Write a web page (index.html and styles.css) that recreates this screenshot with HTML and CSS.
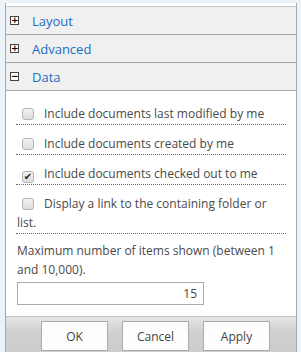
FILE: index.html
```html
<!DOCTYPE html>
<html lang="en">
<head>
    <meta charset="UTF-8">
    <title>Query Options</title>
    <link rel="stylesheet" href="styles.css">
</head>
<body>

    <div class="panel">
        <div class="section-head first">
            <span class="toggle">+</span>
            <span class="title">Layout</span>
        </div>
        <div class="section-head">
            <span class="toggle">+</span>
            <span class="title">Advanced</span>
        </div>
        <div class="section-head">
            <span class="toggle minus">&minus;</span>
            <span class="title">Data</span>
        </div>

        <div class="section-body">
            <div class="row">
                <span class="check"></span>Include documents last modified by me
            </div>
            <div class="row">
                <span class="check"></span>Include documents created by me
            </div>
            <div class="row">
                <span class="check checked">&#10004;</span>Include documents checked out to me
            </div>
            <div class="row">
                <span class="check"></span>Display a link to the containing folder or list.
            </div>
            <div class="field">
                <label for="max-items">Maximum number of items shown (between 1 and 10,000).</label>
                <input type="text" id="max-items" value="15">
            </div>
        </div>

        <!-- Dialog buttons -->
        <div class="footer">
            <button>OK</button>
            <button>Cancel</button>
            <button>Apply</button>
        </div>
    </div>

</body>
</html>
```

FILE: styles.css
```css
body {
    margin: 0;
    background: #edf2f9;
    font-family: 'Open Sans', sans-serif;
    font-size: 12px;
    color: #4a4a4a;
}

.panel {
    width: 290px;
    margin: 3px 0 0 5px;
    padding-top: 3px;
    background: white;
    border-left: 1px solid #a8a8a8;
    border-right: 1px solid #a8a8a8;
}

.section-head {
    display: flex;
    align-items: center;
    height: 27px;
    background: #f0f0f0;
    border-bottom: 1px solid #a6a6a6;
}

.section-head.first {
    border-top: 1px solid #c8c8c8;
}

.toggle {
    width: 7px;
    height: 7px;
    margin-left: 4px;
    border: 1px solid #444444;
    background: white;
    color: #000000;
    font-family: 'DejaVu Sans', sans-serif;
    font-size: 9px;
    font-weight: bold;
    line-height: 7px;
    text-align: center;
}

.title {
    margin-left: 13px;
    color: #1a6ec0;
    font-size: 13px;
}

.section-body {
    padding: 4px 10px 11px 10px;
}

.row {
    padding: 9px 1px 1px 1px;
    line-height: 19px;
    border-bottom: 1px dotted #4a66b8;
}

.check {
    display: inline-block;
    box-sizing: border-box;
    width: 12px;
    height: 12px;
    margin: 0 10px 0 5px;
    vertical-align: -2px;
    border: 1px solid #b4b4b4;
    border-radius: 3px;
    background: linear-gradient(to bottom, #f2f2f2, #dddddd);
    color: #222222;
    font-family: 'DejaVu Sans', sans-serif;
    font-size: 10px;
    line-height: 10px;
    text-align: center;
}

.field {
    padding: 7px 1px 0 1px;
    line-height: 19px;
}

.field input {
    display: block;
    box-sizing: border-box;
    width: 187px;
    height: 23px;
    margin-top: 3px;
    padding: 0 6px;
    border: 1px solid #ababab;
    font-family: 'Open Sans', sans-serif;
    font-size: 12px;
    color: #444444;
    text-align: right;
}

.footer {
    display: flex;
    justify-content: flex-end;
    gap: 14px;
    padding: 4px 26px 4px 0;
    border-top: 1px solid #c2c2c2;
    background: linear-gradient(to bottom, #e6e6e6, #d0d0d0 40%, #cccccc);
}

.footer button {
    width: 67px;
    height: 30px;
    background: #fdfdfd;
    border: 1px solid #ababab;
    font-family: 'Open Sans', sans-serif;
    font-size: 12px;
    color: #444444;
}
```
